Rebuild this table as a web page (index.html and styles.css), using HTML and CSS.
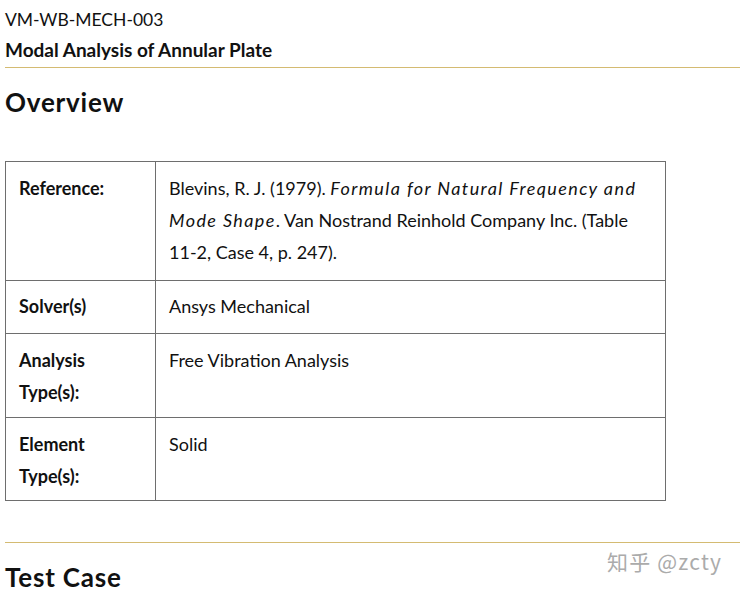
FILE: index.html
```html
<!DOCTYPE html>
<html>
<head>
<meta charset="utf-8">
<link rel="stylesheet" href="styles.css">
</head>
<body>
<div class="page">
  <header class="doc-header">
    <div class="doc-id">VM-WB-MECH-003</div>
    <div class="doc-title">Modal Analysis of Annular Plate</div>
  </header>
  <h1 class="section-title">Overview</h1>
  <table class="overview">
    <tr class="row-ref">
      <th>Reference:</th>
      <td><span>Blevins, R. J. (1979).</span> <em>Formula for Natural Frequency and</em><br><em>Mode Shape</em><span>. Van Nostrand Reinhold Company Inc. (Table</span><br><span>11-2, Case 4, p. 247).</span></td>
    </tr>
    <tr class="row-solver">
      <th>Solver(s)</th>
      <td>Ansys Mechanical</td>
    </tr>
    <tr class="row-tall">
      <th>Analysis<br>Type(s):</th>
      <td>Free Vibration Analysis</td>
    </tr>
    <tr class="row-tall row-last">
      <th>Element<br>Type(s):</th>
      <td>Solid</td>
    </tr>
  </table>
  <div class="rule"></div>
  <h1 class="section-title second">Test Case</h1>
  <div class="watermark">知乎 @zcty</div>
</div>
</body>
</html>
```
FILE: styles.css
```css
html, body {
  margin: 0;
  padding: 0;
  background: #ffffff;
}
body {
  font-family: Lato, "Noto Sans", sans-serif;
  color: #111111;
  overflow: hidden;
}
.page {
  position: relative;
  padding-left: 5px;
  height: 593px;
}
.doc-header {
  border-bottom: 1px solid #d4bb72;
  padding-top: 7px;
  padding-bottom: 4px;
}
.doc-id {
  font-size: 17.5px;
  line-height: 26px;
}
.doc-title {
  font-size: 19px;
  font-weight: bold;
  line-height: 26px;
  margin-top: 4px;
}
.section-title {
  font-size: 26px;
  font-weight: bold;
  letter-spacing: 0.8px;
  margin: 19px 0 0 0;
  line-height: 30px;
}
.overview {
  border-collapse: collapse;
  width: 661px;
  margin-top: 44px;
  font-size: 18px;
}
.overview th,
.overview td {
  border: 1px solid #6e6e6e;
  text-align: left;
  vertical-align: top;
  line-height: 32px;
  padding: 10px 13px 12px 13px;
}
.overview th {
  width: 123px;
  font-weight: bold;
}
.overview td {
  padding-right: 20px;
}
.overview em {
  letter-spacing: 1.4px;
}
.row-solver th, .row-solver td { padding-top: 9px; padding-bottom: 11px; }
.row-tall th, .row-tall td { padding-top: 10px; padding-bottom: 9px; }
.row-last th, .row-last td { padding-bottom: 8px; }
.rule {
  border-top: 1px solid #d4bb72;
  margin-top: 41px;
}
.section-title.second {
  margin-top: 19px;
}
.watermark {
  position: absolute;
  left: 607px;
  top: 546px;
  font-size: 21px;
  letter-spacing: 1.2px;
  color: #ababab;
  font-family: "Noto Sans CJK SC", "Noto Sans", sans-serif;
}
```
